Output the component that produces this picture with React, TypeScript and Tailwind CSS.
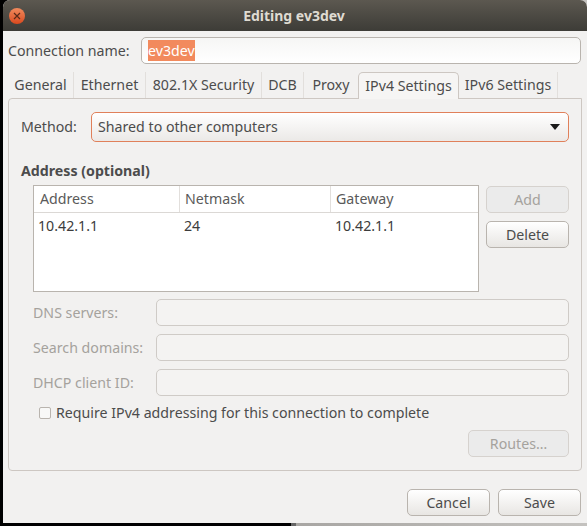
const font = "font-['Noto_Sans',sans-serif]"

function Tab({ label, active, sep, w }: { label: string; active?: boolean; sep?: boolean; w: string }) {
  if (active) {
    return (
      <div className={`${w} -mb-px z-10 flex h-[27px] items-center justify-center rounded-t-[5px] border border-b-0 border-[#cdc7c2] bg-[#f6f5f4] text-[14.2px] text-[#4c4c4c]`}>
        {label}
      </div>
    )
  }
  return (
    <div className={`${w} ${sep ? 'border-r border-[#e2dfdc]' : ''} flex h-[26px] items-center justify-center text-[14.2px] text-[#4c4c4c]`}>
      {label}
    </div>
  )
}

function Btn({ label, disabled, w }: { label: string; disabled?: boolean; w: string }) {
  return (
    <div
      className={
        disabled
          ? `${w} flex h-[27px] items-center justify-center rounded-[5px] border border-[#d6d2ce] bg-[#ebebeb] text-[14.2px] text-[#a5a29d]`
          : `${w} flex h-[27px] items-center justify-center rounded-[5px] border border-[#b9b4ae] bg-gradient-to-b from-[#ffffff] to-[#e8e6e3] text-[14.2px] text-[#4c4c4c]`
      }
    >
      {label}
    </div>
  )
}

function DisabledRow({ label }: { label: string }) {
  return (
    <div className="flex h-[27px] items-center">
      <div className="w-[123px] text-[14.2px] text-[#a5a29d]">{label}</div>
      <div className="h-[27px] w-[413px] rounded-[5px] border border-[#cfcbc7] bg-[#f4f3f2]" />
    </div>
  )
}

export default function App() {
  return (
    <div className={`${font} h-[526px] w-[587px] overflow-hidden bg-[linear-gradient(to_right,#000_291px,#666_291px,#666_296px,#a8a6a3_296px,#c4c2bf_587px)]`}>
      <div className="ml-[3px] h-[523px] w-[584px] overflow-hidden rounded-t-[7px] bg-[#f2f1f0]">
        {/* title bar */}
        <div className="relative flex h-[31px] items-center justify-center bg-gradient-to-b from-[#5c5850] to-[#3d3c37]">
          <div className="absolute left-[6px] top-[8px] flex h-[16px] w-[16px] items-center justify-center rounded-full bg-gradient-to-b from-[#f08a5c] to-[#d9481c]">
            <svg width="8" height="8" viewBox="0 0 8 8" className="text-[#5a2a18]">
              <path d="M1 1l6 6M7 1l-6 6" stroke="currentColor" strokeWidth="1.2" />
            </svg>
          </div>
          <div className="-ml-[2px] text-[14px] font-bold text-[#dfdbd2]">Editing ev3dev</div>
        </div>

        <div className="pl-[5px] pr-[5px]">
          {/* connection name */}
          <div className="mt-[6px] flex h-[27px] items-center">
            <div className="w-[133px] text-[14.2px] text-[#4c4c4c]">Connection name:</div>
            <div className="flex h-[27px] w-[440px] items-center rounded-[5px] border border-[#b9b4ae] bg-gradient-to-b from-[#f6f6f5] to-[#ffffff] pl-[6px] text-[14.2px]">
              <span className="bg-[#f28a5d] text-white">ev3dev</span>
            </div>
          </div>

          {/* tabs */}
          <div className="mt-[8px] flex h-[26px]">
            <Tab label="General" sep w="w-[66px]" />
            <Tab label="Ethernet" sep w="w-[72px]" />
            <Tab label="802.1X Security" sep w="w-[116px]" />
            <Tab label="DCB" sep w="w-[42px]" />
            <Tab label="Proxy" w="w-[54px]" />
            <Tab label="IPv4 Settings" active w="w-[101px]" />
            <Tab label="IPv6 Settings" sep w="w-[99px]" />
          </div>

          {/* panel */}
          <div className="h-[373px] w-[574px] rounded-b-[4px] rounded-tl-[4px] border border-[#cdc7c2] bg-[#f2f1f0] pl-[12px]">
            <div className="mt-[13px] flex h-[30px] items-center">
              <div className="w-[70px] text-[14.2px] text-[#4c4c4c]">Method:</div>
              <div className="flex h-[30px] w-[478px] items-center justify-between rounded-[5px] border border-[#e0805a] bg-gradient-to-b from-[#ffffff] to-[#ebe9e7] pl-[6px] pr-[8px] text-[14.2px] text-[#4c4c4c]">
                <span>Shared to other computers</span>
                <svg width="10" height="6" viewBox="0 0 10 6">
                  <path d="M0 0h10L5 6z" fill="#1a1a1a" />
                </svg>
              </div>
            </div>

            <div className="mt-[19px] text-[14.2px] font-bold leading-[20px] text-[#4c4c4c]">Address (optional)</div>

            <div className="ml-[12px] mt-[4px] flex">
              <div className="h-[107px] w-[446px] border border-[#b9b4ae] bg-white">
                <div className="flex h-[27px] border-b border-[#dbd8d5] text-[14.2px] text-[#5a5a5a]">
                  <div className="flex w-[146px] items-center border-r border-[#e2dfdc] pl-[6px]">Address</div>
                  <div className="flex w-[151px] items-center border-r border-[#e2dfdc] pl-[5px]">Netmask</div>
                  <div className="flex items-center pl-[5px]">Gateway</div>
                </div>
                <div className="mt-[3px] flex h-[20px] items-center text-[14.2px] text-[#3c3c3c]">
                  <div className="w-[146px] pl-[4px]">10.42.1.1</div>
                  <div className="w-[151px] pl-[4px]">24</div>
                  <div className="pl-[4px]">10.42.1.1</div>
                </div>
              </div>
              <div className="ml-[7px] mt-[1px] flex flex-col gap-[8px]">
                <Btn label="Add" disabled w="w-[83px]" />
                <Btn label="Delete" w="w-[83px]" />
              </div>
            </div>

            <div className="ml-[12px] mt-[7px] flex flex-col gap-[8px]">
              <DisabledRow label="DNS servers:" />
              <DisabledRow label="Search domains:" />
              <DisabledRow label="DHCP client ID:" />
            </div>

            <div className="ml-[18px] mt-[7px] flex h-[20px] items-center">
              <div className="h-[12px] w-[12px] rounded-[2px] border border-[#b9b4ae] bg-[#f8f8f7]" />
              <div className="ml-[5px] text-[14.2px] text-[#4c4c4c]">Require IPv4 addressing for this connection to complete</div>
            </div>

            <div className="mt-[7px] flex justify-end pr-[12px]">
              <Btn label="Routes…" disabled w="w-[101px]" />
            </div>
          </div>

          {/* footer buttons */}
          <div className="mt-[18px] flex justify-end gap-[8px] pr-[1px]">
            <Btn label="Cancel" w="w-[83px]" />
            <Btn label="Save" w="w-[83px]" />
          </div>
        </div>
      </div>
    </div>
  )
}
